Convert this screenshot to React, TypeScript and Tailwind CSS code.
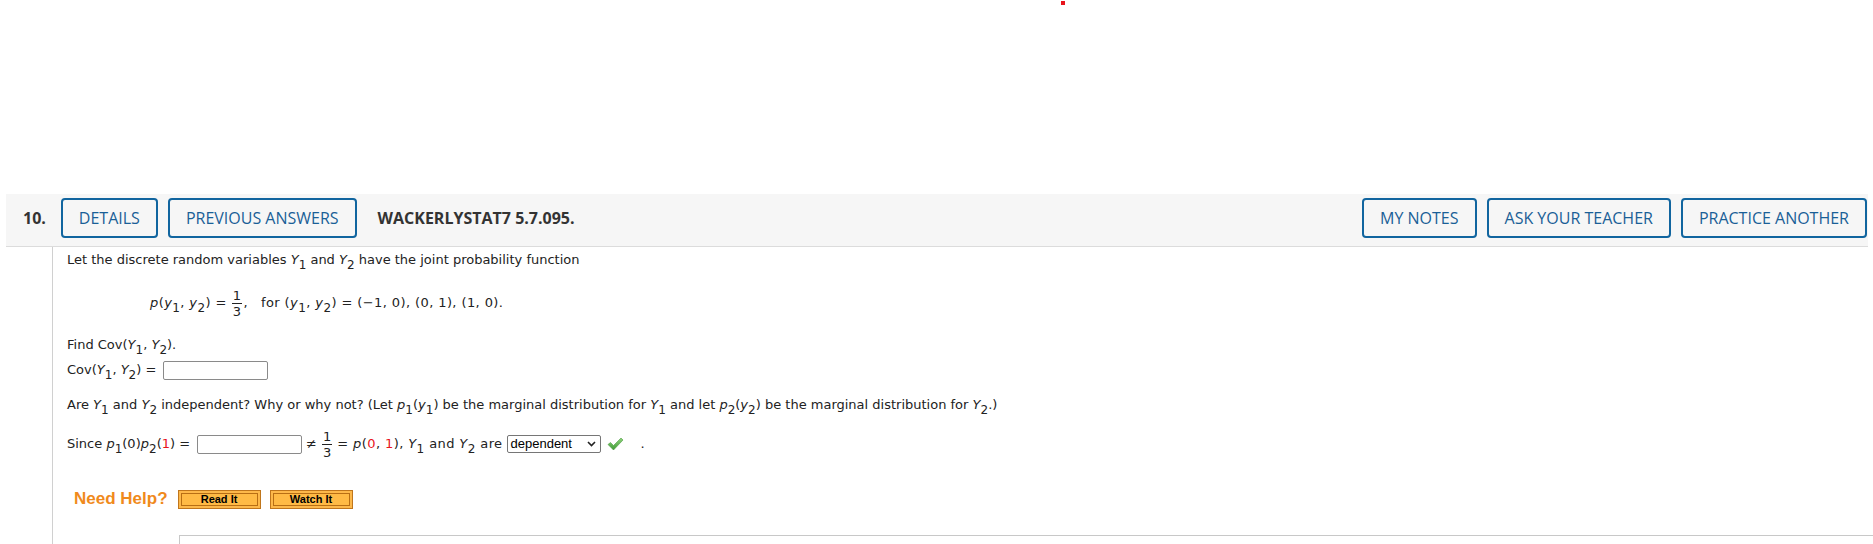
import React from 'react';

const Sub = ({ children }: { children: React.ReactNode }) => (
  <span className="relative top-[5px] text-[12px] leading-none">{children}</span>
);

const V = ({ children }: { children: React.ReactNode }) => <span className="italic">{children}</span>;

const Frac = () => (
  <span className="inline-flex flex-col items-center mx-[5px] leading-[15px] text-[13px]">
    <span className="px-[1px]">1</span>
    <span className="w-[10px] border-t border-[#222]"></span>
    <span className="px-[1px]">3</span>
  </span>
);

const Red = ({ children }: { children: React.ReactNode }) => <span className="text-[#e8141c]">{children}</span>;

const HeadBtn = ({ label }: { label: string }) => (
  <div className="h-[40px] px-[16px] flex items-center border-2 border-[#11659f] rounded-[4px] text-[#1a5f97] text-[16px] font-medium whitespace-nowrap">
    {label}
  </div>
);

const HelpBtn = ({ label }: { label: string }) => (
  <div className="h-[19px] w-[83px] border border-[#c0761c] bg-[#fdb84a] p-[2px]">
    <div className="h-full w-full border border-[#b86e14] bg-[#ffba45] flex items-center justify-center text-[11px] font-bold text-black leading-none">
      {label}
    </div>
  </div>
);

// answer box, left empty as in the screenshot
const Input = () => (
  <span className="inline-block h-[19px] w-[105px] shrink-0 border border-[#8a8a8a] rounded-[2px] bg-white ml-[7px] mr-[4px]"></span>
);

const Check = () => (
  <svg width="17" height="14" viewBox="0 0 17 14" className="ml-[6px]">
    <defs>
      <linearGradient id="g" x1="0" y1="0" x2="0" y2="1">
        <stop offset="0" stopColor="#8fd37c" />
        <stop offset="1" stopColor="#3e9a35" />
      </linearGradient>
    </defs>
    <path d="M1 7.5 L3.5 5.5 L6.5 8.5 L14 1 L16 3 L6.5 13 Z" fill="url(#g)" stroke="#4c9a3f" strokeWidth="0.6" />
  </svg>
);

export default function App() {
  return (
    <div className="relative w-[1873px] h-[544px] bg-white overflow-hidden" style={{ fontFamily: '"DejaVu Sans", Verdana, sans-serif' }}>
      <div className="absolute left-[1061px] top-[1px] w-[4px] h-[4px] bg-[#e8141c]"></div>
      <div className="h-[194px]"></div>

      <div
        className="ml-[6px] mr-[5px] h-[53px] bg-[#f6f6f6] border-b border-[#dcdcdc] flex items-center pl-[17px] pr-[1px] pb-[4px]"
        style={{ fontFamily: '"Open Sans", sans-serif' }}
      >
        <span className="text-[16px] font-bold text-[#333]">10.</span>
        <div className="ml-[15px] flex items-center gap-[10px]">
          <HeadBtn label="DETAILS" />
          <HeadBtn label="PREVIOUS ANSWERS" />
        </div>
        <span className="ml-[21px] text-[16px] font-bold text-[#333]">WACKERLYSTAT7 5.7.095.</span>
        <div className="ml-auto flex items-center gap-[10px]">
          <HeadBtn label="MY NOTES" />
          <HeadBtn label="ASK YOUR TEACHER" />
          <HeadBtn label="PRACTICE ANOTHER" />
        </div>
      </div>

      <div className="ml-[52px] border-l border-[#d0d0d0] pl-[14px] h-[300px] text-[13px] text-[#222]">
        <div className="pt-[3px] h-[23px] flex items-center whitespace-nowrap">
          <span>
            Let the discrete random variables <V>Y</V><Sub>1</Sub> and <V>Y</V><Sub>2</Sub> have the joint probability function
          </span>
        </div>

        <div className="mt-[15px] ml-[83px] h-[36px] flex items-center whitespace-nowrap tracking-[0.4px]">
          <span>
            <V>p</V>(<V>y</V><Sub>1</Sub>, <V>y</V><Sub>2</Sub>) =
          </span>
          <Frac />
          <span className="-ml-[4px]">,</span>
          <span className="ml-[13px]">
            for (<V>y</V><Sub>1</Sub>, <V>y</V><Sub>2</Sub>) = (−1, 0), (0, 1), (1, 0).
          </span>
        </div>

        <div className="mt-[14px] h-[20px] flex items-center whitespace-nowrap">
          <span>
            Find Cov(<V>Y</V><Sub>1</Sub>, <V>Y</V><Sub>2</Sub>).
          </span>
        </div>

        <div className="mt-[3px] h-[24px] flex items-center whitespace-nowrap">
          <span>
            Cov(<V>Y</V><Sub>1</Sub>, <V>Y</V><Sub>2</Sub>) =
          </span>
          <Input />
        </div>

        <div className="mt-[13px] h-[20px] flex items-center whitespace-nowrap">
          <span>
            Are <V>Y</V><Sub>1</Sub> and <V>Y</V><Sub>2</Sub> independent? Why or why not? (Let <V>p</V><Sub>1</Sub>(<V>y</V><Sub>1</Sub>) be the marginal distribution for <V>Y</V><Sub>1</Sub> and let <V>p</V><Sub>2</Sub>(<V>y</V><Sub>2</Sub>) be the marginal distribution for <V>Y</V><Sub>2</Sub>.)
          </span>
        </div>

        <div className="mt-[11px] h-[36px] flex items-center whitespace-nowrap">
          <span>
            Since <V>p</V><Sub>1</Sub>(0)<V>p</V><Sub>2</Sub>(<Red>1</Red>) =
          </span>
          <Input />
          <span>≠</span>
          <Frac />
          <span className="tracking-[0.4px]">
            = <V>p</V>(<Red>0</Red>, <Red>1</Red>), <V>Y</V><Sub>1</Sub> and <V>Y</V><Sub>2</Sub> are
          </span>
          <div
            className="ml-[4px] h-[18px] w-[94px] border border-[#767676] rounded-[2px] bg-white flex items-center justify-between pl-[3px] pr-[4px] text-[13px] text-black"
            style={{ fontFamily: '"Liberation Sans", Arial, sans-serif' }}
          >
            <span>dependent</span>
            <svg width="9" height="6" viewBox="0 0 9 6">
              <path d="M1 1 L4.5 4.5 L8 1" fill="none" stroke="#222" strokeWidth="1.6" />
            </svg>
          </div>
          <Check />
          <span className="ml-[17px]">.</span>
        </div>

        <div className="mt-[26px] ml-[7px] h-[22px] flex items-center gap-[9px]" style={{ fontFamily: '"Liberation Sans", Arial, sans-serif' }}>
          <span className="text-[17px] font-bold text-[#f08a1c] mr-[1px]">Need Help?</span>
          <HelpBtn label="Read It" />
          <HelpBtn label="Watch It" />
        </div>

        <div className="mt-[25px] ml-[112px] h-[60px] border-t border-l border-[#c8c8c8]"></div>
      </div>
    </div>
  );
}
